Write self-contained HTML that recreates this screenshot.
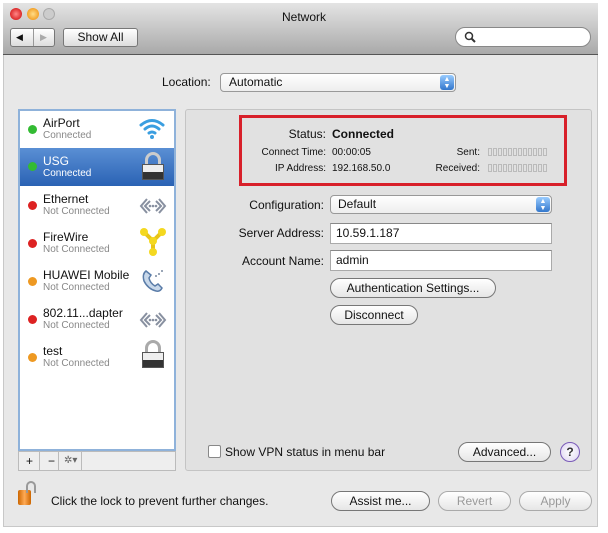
<!DOCTYPE html>
<html><head><meta charset="utf-8"><style>
*{margin:0;padding:0;box-sizing:border-box}
body{width:608px;height:533px;background:#fff;font-family:"Liberation Sans",sans-serif;font-size:12px;color:#111;position:relative;overflow:hidden}
.a{position:absolute}
.win{left:3px;top:3px;width:595px;height:524px;background:#e8e8e8;border:1px solid #c8c8c8}
.tb{left:3px;top:3px;width:595px;height:52px;background:linear-gradient(#e4e4e4,#a9a9a9);border-bottom:1px solid #555}
.btn{background:linear-gradient(#fff,#e6e6e6);border:1px solid #777;border-radius:11px;text-align:center;font-size:12px;line-height:18px}
.lbl{text-align:right;font-size:12px}
.inp{background:#fff;border:1px solid #aaa;border-top-color:#888;padding-left:5px;line-height:19px;font-size:12px}
.dot{width:9px;height:9px;border-radius:50%}
.nm{font-size:12px;line-height:13px}
.st{font-size:10px;color:#888;line-height:12px}
.sm{font-size:10px}
.meter{display:flex;gap:1px}
.meter i{width:4px;height:8px;border:1px solid #bbb;display:block}
</style></head><body>
<div class="a win"></div>
<div class="a tb"></div>
<div class="a dot" style="left:10px;top:8px;width:12px;height:12px;background:radial-gradient(#f88,#c00)"></div>
<div class="a dot" style="left:27px;top:8px;width:12px;height:12px;background:radial-gradient(#fd8,#e80)"></div>
<div class="a dot" style="left:43px;top:8px;width:12px;height:12px;background:#ccc;border:1px solid #aaa"></div>
<div class="a" style="left:0;width:608px;top:10px;text-align:center;font-size:12px">Network</div>
<div class="a" style="left:10px;top:28px;width:45px;height:19px;background:linear-gradient(#fff,#ddd);border:1px solid #777;border-radius:3px;font-size:9px;line-height:17px"><span style="position:absolute;left:5px">◀</span><span style="position:absolute;left:22px;top:0;height:17px;border-left:1px solid #999"></span><span style="position:absolute;left:29px;color:#aaa">▶</span></div>
<div class="a" style="left:63px;top:28px;width:75px;height:19px;background:linear-gradient(#fff,#ddd);border:1px solid #777;border-radius:3px;text-align:center;line-height:17px">Show All</div>
<div class="a" style="left:455px;top:27px;width:136px;height:20px;background:#fff;border:1px solid #888;border-radius:10px"><svg class="a" style="left:8px;top:3px" width="12" height="12"><circle cx="5" cy="5" r="3.5" fill="none" stroke="#333" stroke-width="1.5"/><path d="M7.5 7.5L11 11" stroke="#333" stroke-width="2"/></svg></div>
<div class="a" style="left:162px;top:75px;font-size:12px">Location:</div>
<div class="a" style="left:220px;top:73px;width:236px;height:19px;background:linear-gradient(#fff,#eee);border:1px solid #999;border-radius:4px;padding-left:8px;line-height:17px">Automatic<span style="position:absolute;right:1px;top:1px;width:14px;height:15px;background:linear-gradient(#9cf,#37c);border-radius:3px;color:#fff;font-size:7px;line-height:7px;text-align:center;padding-top:1px">▲<br>▼</span></div>
<div class="a" style="left:18px;top:109px;width:158px;height:342px;background:#fff;border:2px solid #8fb2da"></div>
<div class="a" style="left:20px;top:148px;width:154px;height:38px;background:linear-gradient(#5a8fd4,#2a62b4)"></div>
<div class="a" style="left:18px;top:451px;width:158px;height:20px;background:#eee;border:1px solid #bbb;font-size:12px;line-height:18px"><span style="position:absolute;left:7px">+</span><span style="position:absolute;left:20px;height:18px;border-left:1px solid #bbb"></span><span style="position:absolute;left:29px">−</span><span style="position:absolute;left:39px;height:18px;border-left:1px solid #bbb"></span><span style="position:absolute;left:45px;font-size:10px;color:#666">✲▾</span><span style="position:absolute;left:62px;height:18px;border-left:1px solid #bbb"></span></div>
<div class="a dot" style="left:28px;top:125px;background:#3b3"></div>
<div class="a nm" style="left:43px;top:117px">AirPort</div><div class="a st" style="left:43px;top:130px">Connected</div>
<svg class="a" style="left:138px;top:116px" width="28" height="24"><g fill="none" stroke="#3a9ee0" stroke-width="3" stroke-linecap="round"><path d="M3 9Q14 0 25 9"/><path d="M7 13Q14 7 21 13"/><path d="M11 17Q14 15 17 17"/></g><circle cx="14" cy="21" r="2" fill="#3a9ee0"/></svg>
<div class="a dot" style="left:28px;top:162px;background:#3b3"></div>
<div class="a nm" style="left:43px;top:155px;color:#fff">USG</div><div class="a st" style="left:43px;top:168px;color:#fff">Connected</div>
<div class="a" style="left:142px;top:152px;width:22px;height:29px"><div class="a" style="left:3px;top:0;width:16px;height:15px;border:3px solid #ccc;border-bottom:none;border-radius:8px 8px 0 0"></div><div class="a" style="left:0;top:12px;width:22px;height:16px;background:linear-gradient(#eee 50%,#333 50%);border:1px solid #555"></div></div>
<div class="a dot" style="left:28px;top:201px;background:#d22"></div>
<div class="a nm" style="left:43px;top:193px">Ethernet</div><div class="a st" style="left:43px;top:206px">Not Connected</div>
<svg class="a" style="left:139px;top:196px" width="28" height="20"><g fill="none" stroke="#8890a0" stroke-width="2"><path d="M8 3L2 10L8 17M11 5L6 10L11 15M20 3L26 10L20 17M17 5L22 10L17 15"/></g><g fill="#8890a0"><circle cx="11" cy="10" r="1.3"/><circle cx="14" cy="10" r="1.3"/><circle cx="17" cy="10" r="1.3"/></g></svg>
<div class="a dot" style="left:28px;top:239px;background:#d22"></div>
<div class="a nm" style="left:43px;top:231px">FireWire</div><div class="a st" style="left:43px;top:244px">Not Connected</div>
<svg class="a" style="left:140px;top:228px" width="26" height="28"><g stroke="#e8c418" stroke-width="4" stroke-linecap="round" fill="none"><path d="M4 4L13 13L22 4M13 13V24"/></g><g fill="#f4d820"><circle cx="4" cy="4" r="4"/><circle cx="22" cy="4" r="4"/><circle cx="13" cy="13" r="4"/><circle cx="13" cy="24" r="4"/></g></svg>
<div class="a dot" style="left:28px;top:277px;background:#e92"></div>
<div class="a nm" style="left:43px;top:269px">HUAWEI Mobile</div><div class="a st" style="left:43px;top:282px">Not Connected</div>
<svg class="a" style="left:140px;top:266px" width="28" height="28"><path d="M6 5Q2 8 4 15Q8 23 16 25Q20 26 22 22L18 18L15 20Q10 17 9 12L11 9Z" fill="#c8d8ea" stroke="#5a7ca8" stroke-width="1.5"/><g fill="#7a8aa0"><circle cx="16" cy="10" r="1"/><circle cx="19" cy="8" r="1"/><circle cx="22" cy="5" r="1"/></g></svg>
<div class="a dot" style="left:28px;top:315px;background:#d22"></div>
<div class="a nm" style="left:43px;top:307px">802.11...dapter</div><div class="a st" style="left:43px;top:320px">Not Connected</div>
<svg class="a" style="left:139px;top:310px" width="28" height="20"><g fill="none" stroke="#8890a0" stroke-width="2"><path d="M8 3L2 10L8 17M11 5L6 10L11 15M20 3L26 10L20 17M17 5L22 10L17 15"/></g><g fill="#8890a0"><circle cx="11" cy="10" r="1.3"/><circle cx="14" cy="10" r="1.3"/><circle cx="17" cy="10" r="1.3"/></g></svg>
<div class="a dot" style="left:28px;top:353px;background:#e92"></div>
<div class="a nm" style="left:43px;top:345px">test</div><div class="a st" style="left:43px;top:358px">Not Connected</div>
<div class="a" style="left:142px;top:340px;width:22px;height:29px"><div class="a" style="left:3px;top:0;width:16px;height:15px;border:3px solid #aaa;border-bottom:none;border-radius:8px 8px 0 0"></div><div class="a" style="left:0;top:12px;width:22px;height:16px;background:linear-gradient(#eee 50%,#333 50%);border:1px solid #555"></div></div>
<div class="a" style="left:185px;top:109px;width:407px;height:362px;background:#e1e1e1;border:1px solid #c4c4c4;border-radius:3px"></div>
<div class="a" style="left:239px;top:115px;width:328px;height:71px;border:3px solid #d8202a"></div>
<div class="a lbl" style="left:240px;width:86px;top:127px">Status:</div>
<div class="a" style="left:332px;top:127px;font-weight:bold">Connected</div>
<div class="a lbl sm" style="left:230px;width:96px;top:147px">Connect Time:</div>
<div class="a sm" style="left:332px;top:147px">00:00:05</div>
<div class="a lbl sm" style="left:230px;width:96px;top:163px">IP Address:</div>
<div class="a sm" style="left:332px;top:163px">192.168.50.0</div>
<div class="a lbl sm" style="left:420px;width:60px;top:147px">Sent:</div>
<div class="a meter" style="left:488px;top:148px"><i></i><i></i><i></i><i></i><i></i><i></i><i></i><i></i><i></i><i></i><i></i><i></i></div>
<div class="a lbl sm" style="left:420px;width:60px;top:163px">Received:</div>
<div class="a meter" style="left:488px;top:164px"><i></i><i></i><i></i><i></i><i></i><i></i><i></i><i></i><i></i><i></i><i></i><i></i></div>
<div class="a lbl" style="left:220px;width:104px;top:198px">Configuration:</div>
<div class="a" style="left:330px;top:195px;width:222px;height:19px;background:linear-gradient(#fff,#eee);border:1px solid #999;border-radius:4px;padding-left:7px;line-height:17px">Default<span style="position:absolute;right:1px;top:1px;width:14px;height:15px;background:linear-gradient(#9cf,#37c);border-radius:3px;color:#fff;font-size:7px;line-height:7px;text-align:center;padding-top:1px">▲<br>▼</span></div>
<div class="a lbl" style="left:220px;width:104px;top:226px">Server Address:</div>
<div class="a inp" style="left:330px;top:223px;width:222px;height:21px">10.59.1.187</div>
<div class="a lbl" style="left:220px;width:104px;top:254px">Account Name:</div>
<div class="a inp" style="left:330px;top:250px;width:222px;height:21px">admin</div>
<div class="a btn" style="left:330px;top:278px;width:166px;height:20px">Authentication Settings...</div>
<div class="a btn" style="left:330px;top:305px;width:88px;height:20px">Disconnect</div>
<div class="a" style="left:208px;top:445px;width:13px;height:13px;background:#fff;border:1px solid #888;border-radius:2px"></div>
<div class="a" style="left:225px;top:445px">Show VPN status in menu bar</div>
<div class="a btn" style="left:458px;top:442px;width:93px;height:20px">Advanced...</div>
<div class="a" style="left:560px;top:442px;width:20px;height:20px;border-radius:50%;background:radial-gradient(#fff,#dcd3f0);border:1px solid #7a5bb8;text-align:center;font-weight:bold;line-height:18px;color:#333">?</div>
<div class="a" style="left:18px;top:490px;width:13px;height:15px;background:linear-gradient(90deg,#c60,#fa5,#c60);border-radius:2px"></div>
<div class="a" style="left:26px;top:481px;width:10px;height:12px;border:2px solid #999;border-bottom:none;border-radius:5px 5px 0 0"></div>
<div class="a" style="left:51px;top:494px">Click the lock to prevent further changes.</div>
<div class="a btn" style="left:331px;top:491px;width:99px;height:20px">Assist me...</div>
<div class="a btn" style="left:438px;top:491px;width:73px;height:20px;color:#999;border-color:#aaa">Revert</div>
<div class="a btn" style="left:519px;top:491px;width:73px;height:20px;color:#999;border-color:#aaa">Apply</div>
</body></html>
